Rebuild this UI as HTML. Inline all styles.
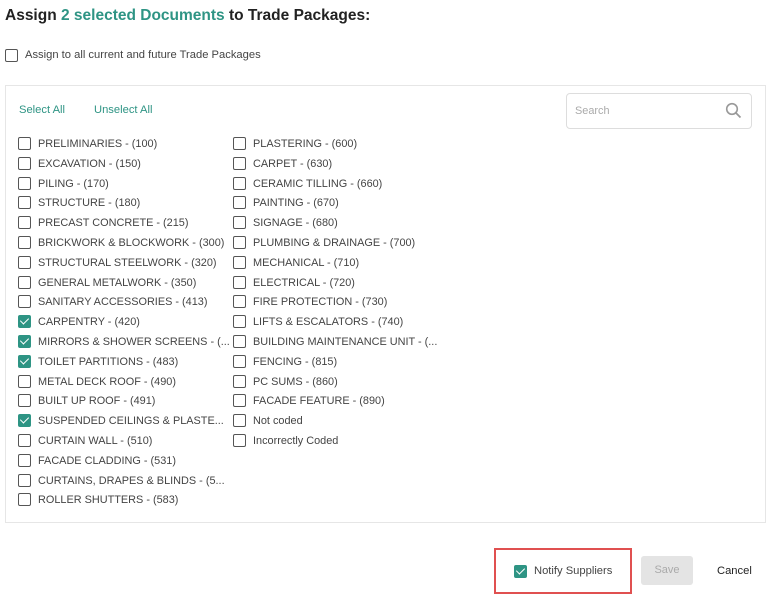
<!DOCTYPE html>
<html><head><style>
*{box-sizing:border-box;margin:0;padding:0}
body{width:784px;height:600px;background:#fff;font-family:"Liberation Sans",sans-serif;color:#333;position:relative;overflow:hidden}
.a{position:absolute}
.cb{position:absolute;width:13px;height:13px;border:1.5px solid #555;border-radius:2px;background:#fff}
.cb.on{background:#2e9484;border-color:#2e9484}
.cb.on::after{content:"";position:absolute;left:3px;top:0px;width:4px;height:7px;border:solid #fff;border-width:0 1.6px 1.6px 0;transform:rotate(45deg)}
.t{position:absolute;font-size:10.9px;color:#444;white-space:nowrap;line-height:14px}
.teal{color:#2e9484}
</style></head><body>
<div class="a" style="left:5px;top:7px;font-size:15.5px;font-weight:bold;color:#222">Assign <span class="teal">2 selected Documents</span> to Trade Packages:</div>
<div class="cb" style="left:5px;top:49px"></div>
<div class="t" style="left:25px;top:48px;font-size:11.2px">Assign to all current and future Trade Packages</div>
<div class="a" style="left:5px;top:85px;width:761px;height:438px;border:1px solid #e6e6e6"></div>
<div class="t teal" style="left:19px;top:103px;font-size:11.2px">Select All</div>
<div class="t teal" style="left:94px;top:103px;font-size:11.2px">Unselect All</div>
<div class="a" style="left:566px;top:93px;width:186px;height:36px;border:1px solid #ddd;border-radius:4px"></div>
<div class="t" style="left:575px;top:104px;color:#aaa">Search</div>
<svg class="a" style="left:725px;top:102px" width="17" height="17" viewBox="0 0 17 17"><circle cx="7" cy="7" r="5.3" fill="none" stroke="#999" stroke-width="1.6"/><line x1="11" y1="11" x2="15.5" y2="15.5" stroke="#999" stroke-width="1.8"/></svg>
<div id="L"></div>
<div class="a" style="left:494px;top:548px;width:138px;height:46px;border:2px solid #e05050"></div>
<div class="cb on" style="left:514px;top:565px"></div>
<div class="t" style="left:534px;top:564px;font-size:11.2px">Notify Suppliers</div>
<div class="a" style="left:641px;top:556px;width:52px;height:29px;background:#e4e4e4;border-radius:3px;font-size:11px;color:#aaa;text-align:center;line-height:29px">Save</div>
<div class="t" style="left:717px;top:564px;color:#222;font-size:11.2px">Cancel</div>
<script>
var l=[["PRELIMINARIES - (100)",0],["EXCAVATION - (150)",0],["PILING - (170)",0],["STRUCTURE - (180)",0],["PRECAST CONCRETE - (215)",0],["BRICKWORK & BLOCKWORK - (300)",0],["STRUCTURAL STEELWORK - (320)",0],["GENERAL METALWORK - (350)",0],["SANITARY ACCESSORIES - (413)",0],["CARPENTRY - (420)",1],["MIRRORS & SHOWER SCREENS - (...",1],["TOILET PARTITIONS - (483)",1],["METAL DECK ROOF - (490)",0],["BUILT UP ROOF - (491)",0],["SUSPENDED CEILINGS & PLASTE...",1],["CURTAIN WALL - (510)",0],["FACADE CLADDING - (531)",0],["CURTAINS, DRAPES & BLINDS - (5...",0],["ROLLER SHUTTERS - (583)",0]];
var r=["PLASTERING - (600)","CARPET - (630)","CERAMIC TILLING - (660)","PAINTING - (670)","SIGNAGE - (680)","PLUMBING & DRAINAGE - (700)","MECHANICAL - (710)","ELECTRICAL - (720)","FIRE PROTECTION - (730)","LIFTS & ESCALATORS - (740)","BUILDING MAINTENANCE UNIT - (...","FENCING - (815)","PC SUMS - (860)","FACADE FEATURE - (890)","Not coded","Incorrectly Coded"];
var h="";
l.forEach(function(x,i){var y=137+i*19.8;h+='<div class="cb'+(x[1]?' on':'')+'" style="left:18px;top:'+y+'px"></div><div class="t" style="left:38px;top:'+y+'px">'+x[0].replace(/&/g,'&amp;')+'</div>';});
r.forEach(function(x,i){var y=137+i*19.8;h+='<div class="cb" style="left:233px;top:'+y+'px"></div><div class="t" style="left:253px;top:'+y+'px">'+x.replace(/&/g,'&amp;')+'</div>';});
document.getElementById("L").innerHTML=h;
</script>
</body></html>
